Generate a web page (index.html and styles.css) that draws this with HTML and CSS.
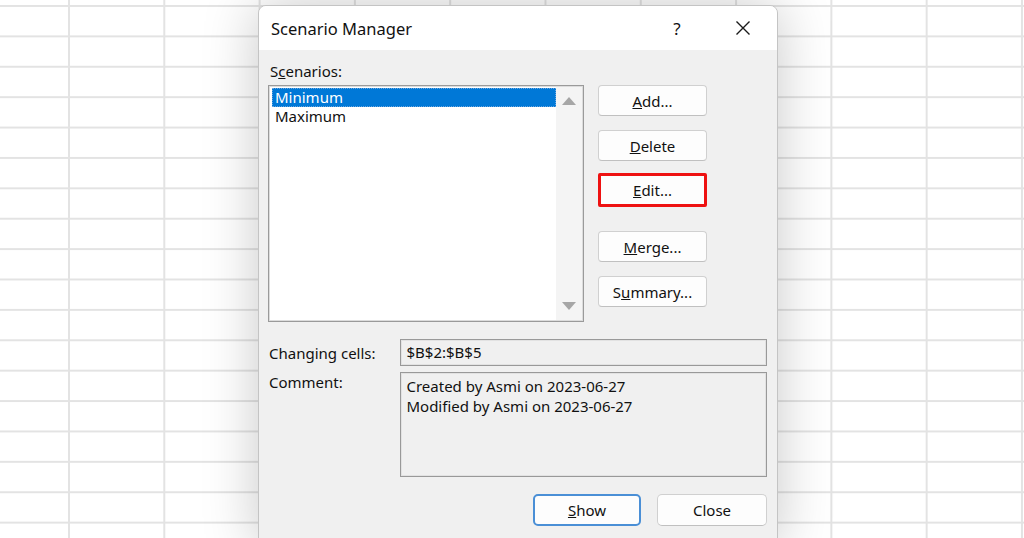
FILE: index.html
```html
<!DOCTYPE html>
<html>
<head>
<meta charset="utf-8">
<title>Scenario Manager</title>
<link rel="stylesheet" href="styles.css">
</head>
<body>
<div class="sheet">
  <div class="dialog">
    <div class="titlebar">
      <span class="title">Scenario Manager</span>
      <span class="help">?</span>
      <span class="closex">
        <svg width="16" height="16" viewBox="0 0 16 16"><path d="M1.5 1.5 L14.5 14.5 M14.5 1.5 L1.5 14.5" stroke="#1a1a1a" stroke-width="1.4" fill="none"/></svg>
      </span>
    </div>
    <div class="content">
      <div class="lbl-scen">S<u>c</u>enarios:</div>
      <div class="main-row">
        <div class="listbox">
          <div class="items">
            <div class="item sel">Minimum</div>
            <div class="item">Maximum</div>
          </div>
          <div class="scroll">
            <svg width="14" height="10" viewBox="0 0 14 10"><path d="M0 9 L7 1 L14 9 Z" fill="#a6a6a6"/></svg>
            <svg width="14" height="10" viewBox="0 0 14 10"><path d="M0 1 L7 9 L14 1 Z" fill="#a6a6a6"/></svg>
          </div>
        </div>
        <div class="btncol">
          <button class="btn b-add"><u>A</u>dd...</button>
          <button class="btn b-del"><u>D</u>elete</button>
          <button class="btn b-edit"><u>E</u>dit...</button>
          <button class="btn b-merge"><u>M</u>erge...</button>
          <button class="btn b-sum">S<u>u</u>mmary...</button>
        </div>
      </div>
      <div class="field-row r-cells">
        <div class="flabel">Changing cells:</div>
        <div class="fbox box-cells">$B$2:$B$5</div>
      </div>
      <div class="field-row r-comment">
        <div class="flabel">Comment:</div>
        <div class="fbox box-comment">Created by Asmi on 2023-06-27<br>Modified by Asmi on 2023-06-27</div>
      </div>
      <div class="footer">
        <button class="btn b-show"><u>S</u>how</button>
        <button class="btn b-close">Close</button>
      </div>
    </div>
  </div>
</div>
</body>
</html>
```

FILE: styles.css
```css
html, body {
  margin: 0;
  padding: 0;
  width: 1024px;
  height: 538px;
  overflow: hidden;
}
body {
  font-family: "Noto Sans", "Open Sans", sans-serif;
  color: #111111;
}
.sheet {
  width: 1024px;
  height: 538px;
  background-color: #ffffff;
  background-image:
    linear-gradient(to right, #e3e3e3 0, #e3e3e3 2px, transparent 2px),
    linear-gradient(to bottom, #e3e3e3 0, #e3e3e3 2px, transparent 2px);
  background-size: 95.3px 30.4px, 95.3px 30.4px;
  background-position: 68px 5px, 68px 5px;
  padding-top: 5px;
  box-sizing: border-box;
  overflow: hidden;
}
.dialog {
  margin-left: 258px;
  width: 520px;
  height: 545px;
  box-sizing: border-box;
  border: 1px solid #c4c4c4;
  border-radius: 8px;
  background: #f0f0f0;
  box-shadow: 0 0 55px rgba(0, 0, 0, 0.22);
  overflow: hidden;
  font-size: 15px;
}
.titlebar {
  height: 44px;
  background: #ffffff;
  display: flex;
  align-items: center;
  padding-left: 12px;
  box-sizing: border-box;
}
.title {
  font-size: 16.5px;
  flex: 1;
}
.help {
  font-size: 17px;
  width: 30px;
  text-align: center;
  margin-right: 43px;
}
.closex {
  display: flex;
  width: 16px;
  margin-right: 26px;
}
.content {
  padding: 12px 10px 0 9px;
}
.lbl-scen {
  height: 18px;
  line-height: 18px;
  padding-left: 2px;
}
.main-row {
  display: flex;
  margin-top: 5px;
}
.listbox {
  width: 316px;
  height: 237px;
  box-sizing: border-box;
  border: 1px solid #9a9a9a;
  box-shadow: inset 0 0 0 1px #dcdcdc;
  background: #ffffff;
  display: flex;
}
.items {
  flex: 1;
  padding: 2px 0 0 3px;
}
.item {
  height: 19px;
  line-height: 18px;
  padding-left: 3px;
  width: 284px;
  box-sizing: border-box;
}
.item.sel {
  background: #0078d7;
  color: #ffffff;
  outline: 1px dotted #6aa7e0;
  outline-offset: -1px;
}
.scroll {
  width: 26px;
  background: #f4f4f4;
  margin: 1px 1px 1px 0;
  display: flex;
  flex-direction: column;
  align-items: center;
  justify-content: space-between;
  padding: 9px 0 9px;
}
.btncol {
  display: flex;
  flex-direction: column;
  margin-left: 14px;
}
.btn {
  font-family: "Noto Sans", "Open Sans", sans-serif;
  font-size: 15px;
  color: #111111;
  background: #fdfdfd;
  border: 1px solid #d0d0d0;
  border-bottom-color: #c0c0c0;
  border-radius: 4px;
  width: 109px;
  height: 31px;
  padding: 0;
  box-sizing: border-box;
  margin: 0;
}
.b-del { margin-top: 14px; }
.b-edit {
  margin-top: 12px;
  height: 34px;
  border: 3px solid #ee1111;
  border-radius: 2px;
}
.b-merge { margin-top: 24px; }
.b-sum { margin-top: 14px; }
.field-row {
  display: flex;
}
.flabel {
  width: 132px;
  padding-left: 1px;
}
.r-cells {
  margin-top: 17px;
  align-items: center;
}
.r-comment {
  margin-top: 6px;
}
.fbox {
  width: 368px;
  box-sizing: border-box;
  border: 1px solid #999999;
  box-shadow: inset 0 0 0 1px #e2e2e2;
  background: #f0f0f0;
  padding-left: 5px;
}
.box-cells {
  height: 27px;
  line-height: 25px;
}
.box-comment {
  height: 105px;
  padding-top: 3px;
  line-height: 20px;
}
.footer {
  display: flex;
  justify-content: flex-end;
  margin-top: 17px;
  gap: 16px;
}
.b-show {
  width: 108px;
  height: 32px;
  border: 2px solid #4a8fd6;
  border-radius: 5px;
}
.b-close {
  width: 110px;
  height: 32px;
  border-radius: 5px;
}
```
